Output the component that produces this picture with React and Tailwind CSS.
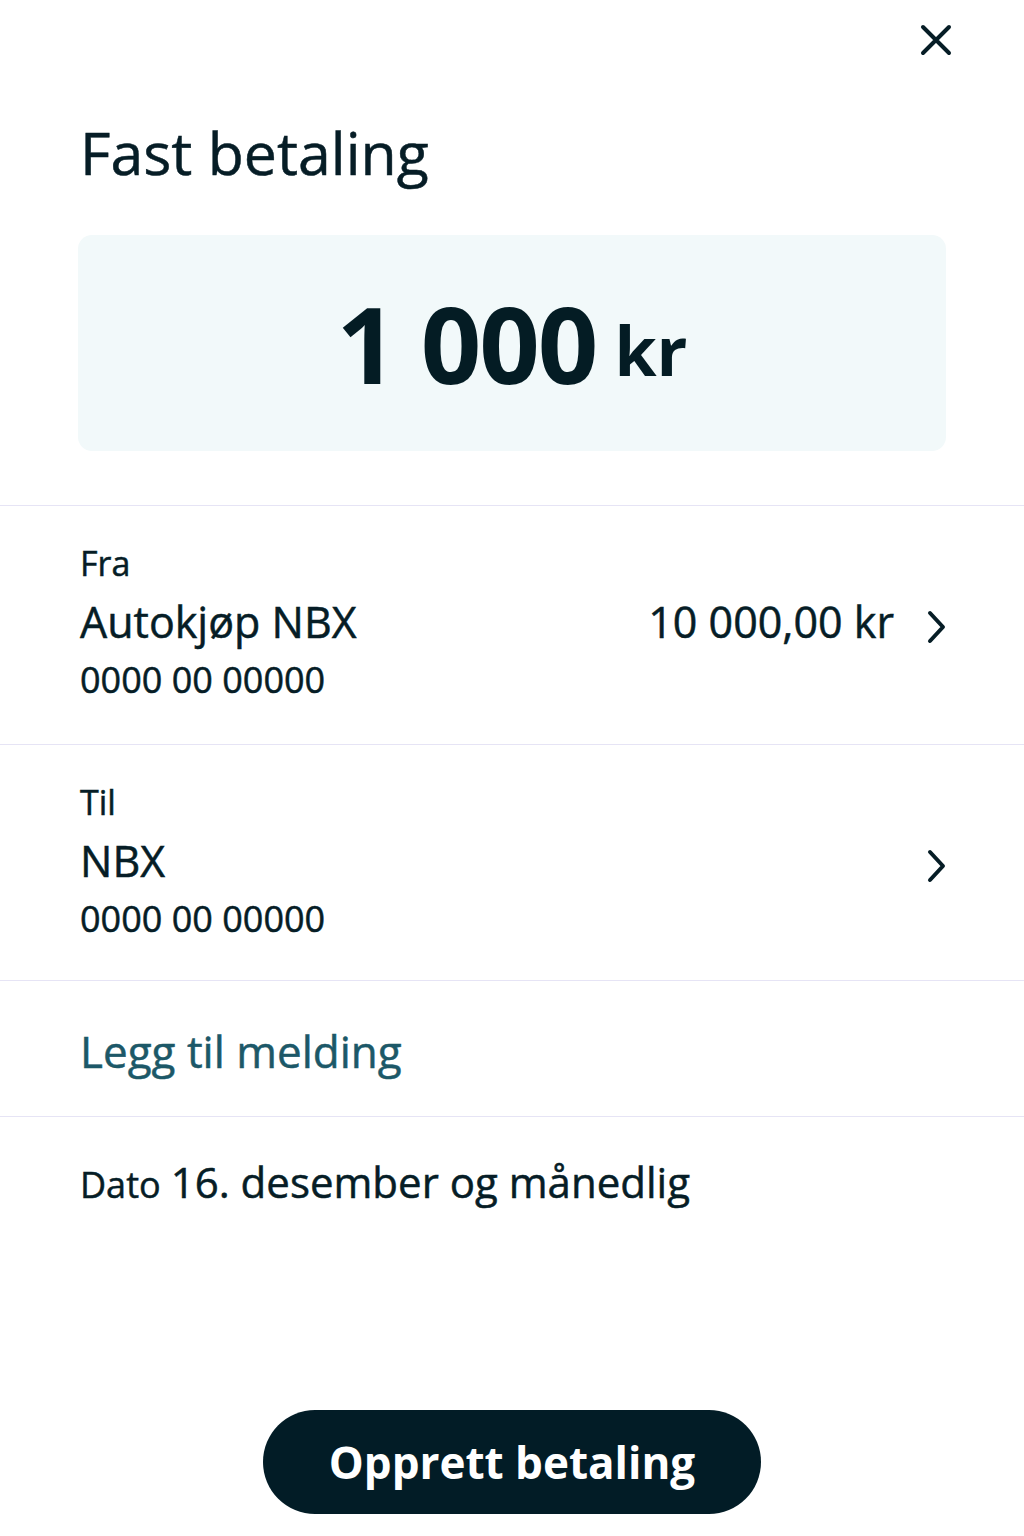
import React from 'react';

const font = { fontFamily: '"Open Sans", "Noto Sans", sans-serif' };

// Open Sans here has no 500 weight, so thicken the regular cut a touch
const medium = 'font-medium [-webkit-text-stroke:0.5px_currentColor]';

const Chevron = () => (
  <svg width="22" height="36" viewBox="0 0 22 36" fill="none" className="shrink-0">
    <path d="M4 4 L17 18 L4 32" stroke="#061d26" strokeWidth="4" strokeLinecap="round" strokeLinejoin="round" />
  </svg>
);

const AccountRow = ({ label, name, account, amount, last }) => (
  <div className={`border-b border-[#e6e4f5] pl-[80px] pr-[76px] pt-[37px] text-[#061d26] ${last ? 'pb-[40px]' : 'pb-[43px]'}`}>
    <div className={`text-[34px] leading-[40px] ${medium}`}>{label}</div>
    <div className="mt-[10px] flex items-center justify-between">
      <span className={`text-[43px] leading-[58px] ${medium}`}>{name}</span>
      <div className="flex items-center gap-[32px] translate-y-[5px]">
        {amount && <span className={`text-[43px] leading-[58px] -translate-y-[5px] ${medium}`}>{amount}</span>}
        <Chevron />
      </div>
    </div>
    <div className={`mt-[8px] text-[36px] leading-[42px] ${medium}`}>{account}</div>
  </div>
);

export default function App() {
  return (
    <div className="w-[1024px] h-[1536px] bg-white flex flex-col" style={font}>
      <div className="flex justify-end pt-[24px] pr-[72px]">
        <svg width="32" height="32" viewBox="0 0 32 32" fill="none">
          <path d="M3 3 L29 29 M29 3 L3 29" stroke="#061d26" strokeWidth="4" strokeLinecap="round" />
        </svg>
      </div>
      <h1 className={`px-[80px] mt-[56px] text-[59px] leading-[80px] text-[#061d26] ${medium}`}>Fast betaling</h1>
      <div className="px-[78px] mt-[43px] pb-[54px] border-b border-[#e6e4f5]">
        <div className="h-[216px] rounded-[14px] bg-[#f2f9fa] flex items-center justify-center text-[#041c24]">
          <span className="text-[106px] font-bold leading-none tracking-[-2px]">1 000</span>
          <span className="text-[68px] font-bold leading-none ml-[18px] mt-[14px]">kr</span>
        </div>
      </div>
      <AccountRow label="Fra" name="Autokjøp NBX" account="0000 00 00000" amount="10 000,00 kr" />
      <AccountRow label="Til" name="NBX" account="0000 00 00000" last />
      <div className="border-b border-[#e6e4f5] px-[80px] h-[136px] flex items-center">
        <span className={`text-[44px] text-[#1c5868] translate-y-[2px] ${medium}`}>Legg til melding</span>
      </div>
      <div className={`px-[80px] pt-[33px] flex items-baseline text-[#061d26] ${medium}`}>
        <span className="text-[36px]">Dato</span>
        <span className="text-[42px] ml-[10px]">16. desember og månedlig</span>
      </div>
      <div className="flex-1" />
      <div className="flex justify-center pb-[22px]">
        <button className="w-[498px] h-[104px] rounded-full bg-[#021c26] text-white text-[44px] font-bold">
          Opprett betaling
        </button>
      </div>
    </div>
  );
}
